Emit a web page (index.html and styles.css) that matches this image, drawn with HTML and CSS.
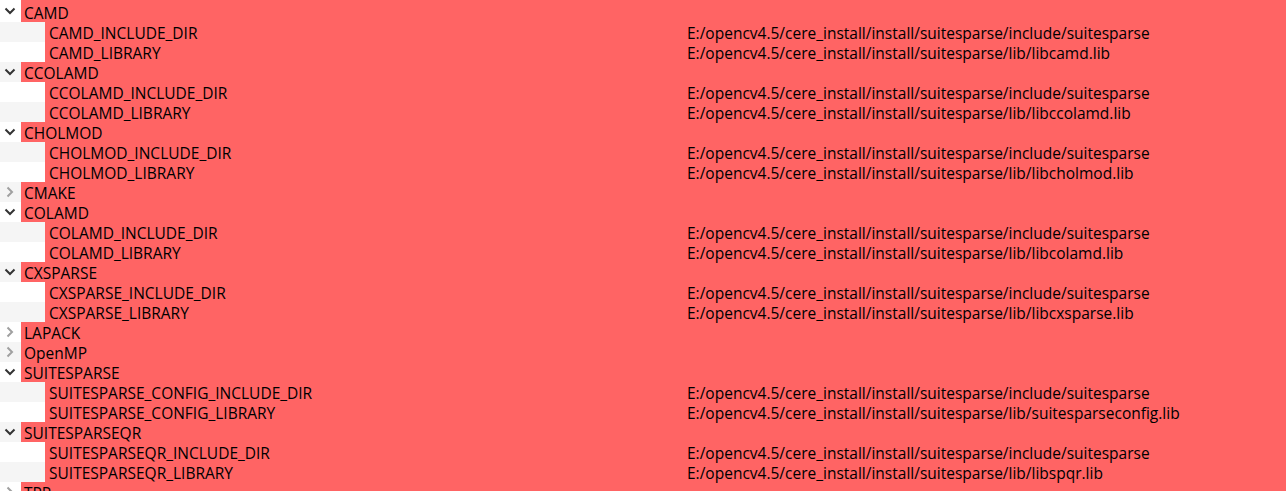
FILE: index.html
```html
<!DOCTYPE html>
<html>
<head>
<meta charset="utf-8">
<link rel="stylesheet" href="styles.css">
</head>
<body>
<div class="tree">
  <div class="row parent first"><div class="branch"><svg viewBox="0 0 12 8" class="down"><path d="M1.5 1.5 L6 6 L10.5 1.5" /></svg></div><div class="cells"><div class="name">CAMD</div><div class="value"></div></div></div>
  <div class="row child alt"><div class="branch"></div><div class="cells"><div class="name">CAMD_INCLUDE_DIR</div><div class="value">E:/opencv4.5/cere_install/install/suitesparse/include/suitesparse</div></div></div>
  <div class="row child"><div class="branch"></div><div class="cells"><div class="name">CAMD_LIBRARY</div><div class="value">E:/opencv4.5/cere_install/install/suitesparse/lib/libcamd.lib</div></div></div>
  <div class="row parent alt"><div class="branch"><svg viewBox="0 0 12 8" class="down"><path d="M1.5 1.5 L6 6 L10.5 1.5" /></svg></div><div class="cells"><div class="name">CCOLAMD</div><div class="value"></div></div></div>
  <div class="row child"><div class="branch"></div><div class="cells"><div class="name">CCOLAMD_INCLUDE_DIR</div><div class="value">E:/opencv4.5/cere_install/install/suitesparse/include/suitesparse</div></div></div>
  <div class="row child alt"><div class="branch"></div><div class="cells"><div class="name">CCOLAMD_LIBRARY</div><div class="value">E:/opencv4.5/cere_install/install/suitesparse/lib/libccolamd.lib</div></div></div>
  <div class="row parent"><div class="branch"><svg viewBox="0 0 12 8" class="down"><path d="M1.5 1.5 L6 6 L10.5 1.5" /></svg></div><div class="cells"><div class="name">CHOLMOD</div><div class="value"></div></div></div>
  <div class="row child alt"><div class="branch"></div><div class="cells"><div class="name">CHOLMOD_INCLUDE_DIR</div><div class="value">E:/opencv4.5/cere_install/install/suitesparse/include/suitesparse</div></div></div>
  <div class="row child"><div class="branch"></div><div class="cells"><div class="name">CHOLMOD_LIBRARY</div><div class="value">E:/opencv4.5/cere_install/install/suitesparse/lib/libcholmod.lib</div></div></div>
  <div class="row parent alt"><div class="branch"><svg viewBox="0 0 8 12" class="right"><path d="M1.5 1.5 L6 6 L1.5 10.5" /></svg></div><div class="cells"><div class="name">CMAKE</div><div class="value"></div></div></div>
  <div class="row parent"><div class="branch"><svg viewBox="0 0 12 8" class="down"><path d="M1.5 1.5 L6 6 L10.5 1.5" /></svg></div><div class="cells"><div class="name">COLAMD</div><div class="value"></div></div></div>
  <div class="row child alt"><div class="branch"></div><div class="cells"><div class="name">COLAMD_INCLUDE_DIR</div><div class="value">E:/opencv4.5/cere_install/install/suitesparse/include/suitesparse</div></div></div>
  <div class="row child"><div class="branch"></div><div class="cells"><div class="name">COLAMD_LIBRARY</div><div class="value">E:/opencv4.5/cere_install/install/suitesparse/lib/libcolamd.lib</div></div></div>
  <div class="row parent alt"><div class="branch"><svg viewBox="0 0 12 8" class="down"><path d="M1.5 1.5 L6 6 L10.5 1.5" /></svg></div><div class="cells"><div class="name">CXSPARSE</div><div class="value"></div></div></div>
  <div class="row child"><div class="branch"></div><div class="cells"><div class="name">CXSPARSE_INCLUDE_DIR</div><div class="value">E:/opencv4.5/cere_install/install/suitesparse/include/suitesparse</div></div></div>
  <div class="row child alt"><div class="branch"></div><div class="cells"><div class="name">CXSPARSE_LIBRARY</div><div class="value">E:/opencv4.5/cere_install/install/suitesparse/lib/libcxsparse.lib</div></div></div>
  <div class="row parent"><div class="branch"><svg viewBox="0 0 8 12" class="right"><path d="M1.5 1.5 L6 6 L1.5 10.5" /></svg></div><div class="cells"><div class="name">LAPACK</div><div class="value"></div></div></div>
  <div class="row parent alt"><div class="branch"><svg viewBox="0 0 8 12" class="right"><path d="M1.5 1.5 L6 6 L1.5 10.5" /></svg></div><div class="cells"><div class="name">OpenMP</div><div class="value"></div></div></div>
  <div class="row parent"><div class="branch"><svg viewBox="0 0 12 8" class="down"><path d="M1.5 1.5 L6 6 L10.5 1.5" /></svg></div><div class="cells"><div class="name">SUITESPARSE</div><div class="value"></div></div></div>
  <div class="row child alt"><div class="branch"></div><div class="cells"><div class="name">SUITESPARSE_CONFIG_INCLUDE_DIR</div><div class="value">E:/opencv4.5/cere_install/install/suitesparse/include/suitesparse</div></div></div>
  <div class="row child"><div class="branch"></div><div class="cells"><div class="name">SUITESPARSE_CONFIG_LIBRARY</div><div class="value">E:/opencv4.5/cere_install/install/suitesparse/lib/suitesparseconfig.lib</div></div></div>
  <div class="row parent alt"><div class="branch"><svg viewBox="0 0 12 8" class="down"><path d="M1.5 1.5 L6 6 L10.5 1.5" /></svg></div><div class="cells"><div class="name">SUITESPARSEQR</div><div class="value"></div></div></div>
  <div class="row child"><div class="branch"></div><div class="cells"><div class="name">SUITESPARSEQR_INCLUDE_DIR</div><div class="value">E:/opencv4.5/cere_install/install/suitesparse/include/suitesparse</div></div></div>
  <div class="row child alt"><div class="branch"></div><div class="cells"><div class="name">SUITESPARSEQR_LIBRARY</div><div class="value">E:/opencv4.5/cere_install/install/suitesparse/lib/libspqr.lib</div></div></div>
  <div class="row parent"><div class="branch"><svg viewBox="0 0 8 12" class="right"><path d="M1.5 1.5 L6 6 L1.5 10.5" /></svg></div><div class="cells"><div class="name">TPP</div><div class="value"></div></div></div>
</div>
</body>
</html>
```

FILE: styles.css
```css
html, body {
  margin: 0;
  padding: 0;
  background: #ffffff;
  overflow: hidden;
}
.tree {
  font-family: "Open Sans", "Noto Sans", sans-serif;
  font-size: 15.5px;
  color: #000;
  width: 1286px;
}
.row {
  display: flex;
  height: 20px;
  background: #ffffff;
}
.row.first {
  height: 22px;
  align-items: flex-end;
}
.row.first .branch,
.row.first .cells {
  height: 22px;
}
.row.alt {
  background: #f5f5f5;
}
.branch {
  flex: none;
  display: flex;
  align-items: center;
  justify-content: center;
}
.parent .branch {
  width: 21px;
}
.child .branch {
  width: 45px;
}
.cells {
  flex: 1;
  display: flex;
  align-items: flex-end;
  background: #ff6464;
  height: 20px;
  white-space: nowrap;
}
.name,
.value {
  height: 20px;
  line-height: 20px;
  position: relative;
  top: 1px;
}
.name {
  flex: none;
  padding-left: 3px;
}
.parent .name {
  width: 659px;
}
.child .name {
  width: 634px;
  padding-left: 4px;
}
.value {
  flex: 1;
  padding-left: 4px;
}
svg {
  fill: none;
  stroke-width: 2;
}
svg.down {
  width: 12px;
  height: 8px;
  stroke: #333333;
  margin-left: -1px;
}
svg.right {
  width: 8px;
  height: 12px;
  stroke: #a0a0a0;
  margin-left: -2px;
}
```
